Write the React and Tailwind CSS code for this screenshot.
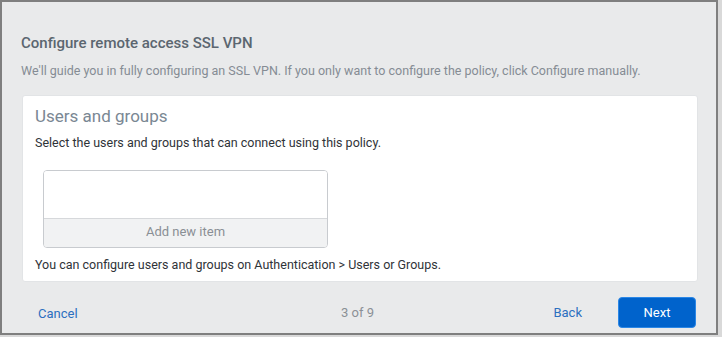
export default function App() {
    return (
        <div className="w-[722px] h-[337px] bg-[#d9d9d9] font-['Roboto',sans-serif]">
            <div className="w-[718px] h-[335px] border-2 border-[#7f7f7f] bg-[#e9eaeb] flex flex-col">
                {/* HEADER */}
                <div className="pl-[19px] pt-[31px]">
                    <h1 className="text-[15px] font-medium text-[#5b6670] leading-5">
                        Configure remote access SSL VPN
                    </h1>
                    <p className="mt-[10px] text-[12.5px] text-[#858c94] leading-4">
                        We'll guide you in fully configuring an SSL VPN. If you only want to configure the policy, click Configure manually.
                    </p>
                </div>

                {/* CARD */}
                <div className="ml-[20px] mr-[18px] mt-[16px] h-[187px] bg-white rounded-[3px] border border-[#e2e4e6] pl-[12px] pt-[8px]">
                    <h2 className="text-[17px] text-[#7a8793] leading-6">Users and groups</h2>
                    <p className="mt-[7px] text-[12.5px] text-[#2f3338] leading-4">
                        Select the users and groups that can connect using this policy.
                    </p>

                    <div className="ml-[8px] mt-[19px] w-[285px] h-[78px] border border-[#c8cbcf] rounded-[4px] flex flex-col overflow-hidden">
                        <div className="flex-1 bg-white" />
                        <div className="h-[29px] border-t border-[#d6d8db] bg-[#f1f2f3] flex items-center justify-center pb-[2px] text-[13px] text-[#8a8f95]">
                            Add new item
                        </div>
                    </div>

                    <p className="mt-[9px] text-[12.5px] text-[#2f3338] leading-4">
                        You can configure users and groups on Authentication &gt; Users or Groups.
                    </p>
                </div>

                {/* FOOTER */}
                <div className="grid grid-cols-3 items-center mt-[15px] pl-[36px] pr-[20px]">
                    <div>
                        <button className="text-[13px] text-[#2c6fc0]">Cancel</button>
                    </div>
                    <div className="text-center text-[13px] text-[#8b9096] pr-[19px]">3 of 9</div>
                    <div className="flex items-center justify-end">
                        <button className="text-[13px] text-[#2c6fc0] mr-[36px]">Back</button>
                        <button className="w-[78px] h-[31px] rounded-[4px] bg-[#0063cc] border border-[#2b87e6] text-[13px] text-white">
                            Next
                        </button>
                    </div>
                </div>
            </div>
        </div>
    );
}
